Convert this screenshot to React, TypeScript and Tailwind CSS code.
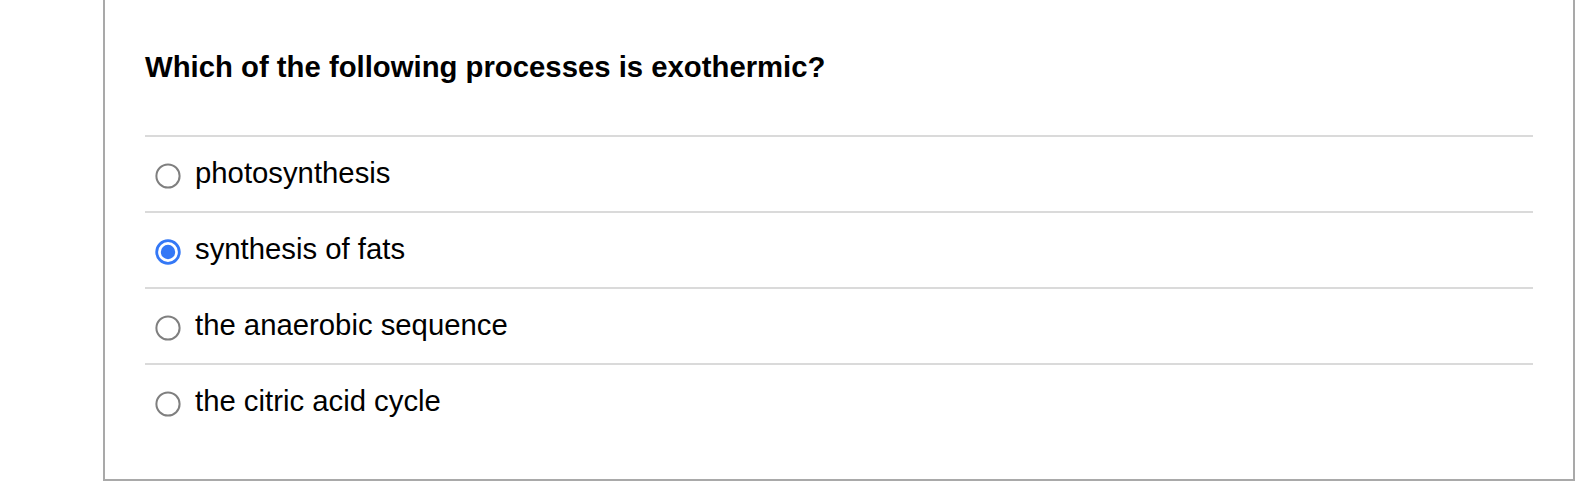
import React from "react";

const options = [
  { label: "photosynthesis", checked: false },
  { label: "synthesis of fats", checked: true },
  { label: "the anaerobic sequence", checked: false },
  { label: "the citric acid cycle", checked: false },
];

function Radio({ checked }: { checked: boolean }) {
  return (
    <svg width="26" height="26" viewBox="0 0 26 26" className="shrink-0">
      {checked ? (
        <>
          <circle cx="13" cy="13" r="11.3" fill="#fff" stroke="#3478f6" strokeWidth="2.8" />
          <circle cx="13" cy="13" r="7.2" fill="#3478f6" />
        </>
      ) : (
        <circle cx="13" cy="13" r="11.6" fill="#fff" stroke="#7f7f7f" strokeWidth="2" />
      )}
    </svg>
  );
}

export default function App() {
  return (
    <div className="min-h-[501px] bg-white font-['Liberation_Sans',Arial,sans-serif] text-black">
      <div className="ml-[103px] w-[1472px] border-x-2 border-b-2 border-[#a9a9a9] px-10 pb-10">
        {/* Question */}
        <h1 className="pt-[50px] text-[29.3px] font-bold leading-[33px]">
          Which of the following processes is exothermic?
        </h1>

        {/* Choices */}
        <div className="mt-[52px]">
          {options.map((opt) => (
            <div key={opt.label}>
              <div className="h-[2px] bg-[#dadada]" />
              <label className="flex h-[74px] items-start">
                <span className="ml-[10px] mt-[26px]">
                  <Radio checked={opt.checked} />
                </span>
                <span className="ml-[14px] mt-[19px] text-[29.3px] leading-[33px]">
                  {opt.label}
                </span>
              </label>
            </div>
          ))}
        </div>
      </div>
    </div>
  );
}
